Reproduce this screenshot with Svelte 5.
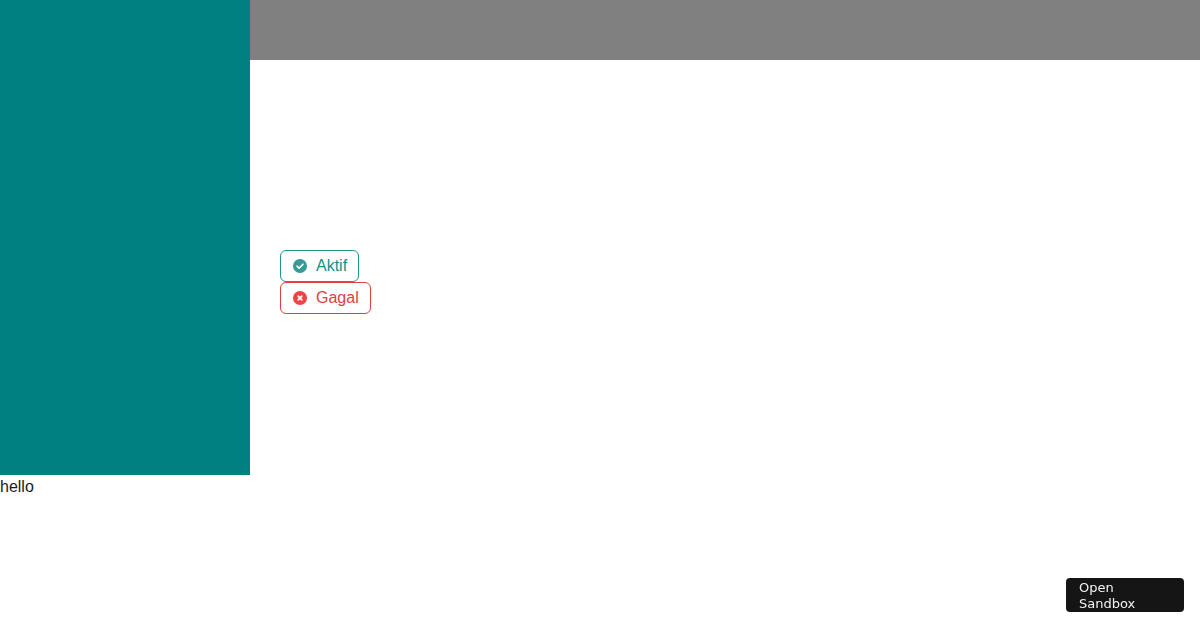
<script>
  const statuses = [
    { label: 'Aktif', kind: 'success' },
    { label: 'Gagal', kind: 'error' }
  ];
</script>

<div class="layout">
  <aside class="sidebar"></aside>
  <div class="main">
    <header class="topbar"></header>
    <div class="content">
      {#each statuses as status}
        <div class="row">
          <span class="badge {status.kind}">
            <svg class="icon" viewBox="0 0 14 14" aria-hidden="true">
              <circle class="disc" cx="7" cy="7" r="7" />
              {#if status.kind === 'success'}
                <path class="mark" d="M4 7.2 6.1 9.2 10 5.2" stroke-width="1.6" />
              {:else}
                <path class="mark" d="M5.2 5.2 8.8 8.8M8.8 5.2 5.2 8.8" stroke-width="1.7" />
              {/if}
            </svg>
            {status.label}
          </span>
        </div>
      {/each}
    </div>
  </div>
</div>
<div class="hello">hello</div>

<a class="sandbox" href="#open">Open Sandbox</a>

<style>
  :global(body) {
    font-family: 'Liberation Sans', Arial, sans-serif;
    font-size: 16px;
    color: #1a1a1a;
    background: #fff;
  }

  .layout {
    display: flex;
    height: 475px;
  }

  .sidebar {
    width: 250px;
    flex-shrink: 0;
    background: #008080;
  }

  .main {
    flex: 1;
    display: flex;
    flex-direction: column;
  }

  .topbar {
    height: 60px;
    background: #808080;
  }

  .content {
    padding: 190px 30px 0;
  }

  .row {
    display: flex;
  }

  .badge {
    display: inline-flex;
    align-items: center;
    gap: 9px;
    height: 32px;
    box-sizing: border-box;
    padding: 0 11px 0 12px;
    border: 1px solid;
    border-radius: 6px;
    line-height: 18px;
  }

  .icon {
    width: 14px;
    height: 14px;
  }

  .mark {
    fill: none;
    stroke: #fff;
    stroke-linecap: round;
    stroke-linejoin: round;
  }

  .success {
    color: #14908a;
    border-color: #1f968e;
  }

  .success .disc {
    fill: #389a94;
  }

  .error {
    color: #e04040;
    border-color: #e53e3e;
  }

  .error .disc {
    fill: #ef4444;
  }

  .hello {
    height: 24px;
    line-height: 24px;
  }

  .sandbox {
    position: fixed;
    right: 16px;
    bottom: 18px;
    width: 118px;
    height: 34px;
    box-sizing: border-box;
    padding: 2px 13px 0;
    background: #151515;
    border-radius: 4px;
    color: #f2f2f2;
    font-family: 'DejaVu Sans', Verdana, sans-serif;
    font-size: 13px;
    line-height: 16px;
    text-decoration: none;
  }
</style>
